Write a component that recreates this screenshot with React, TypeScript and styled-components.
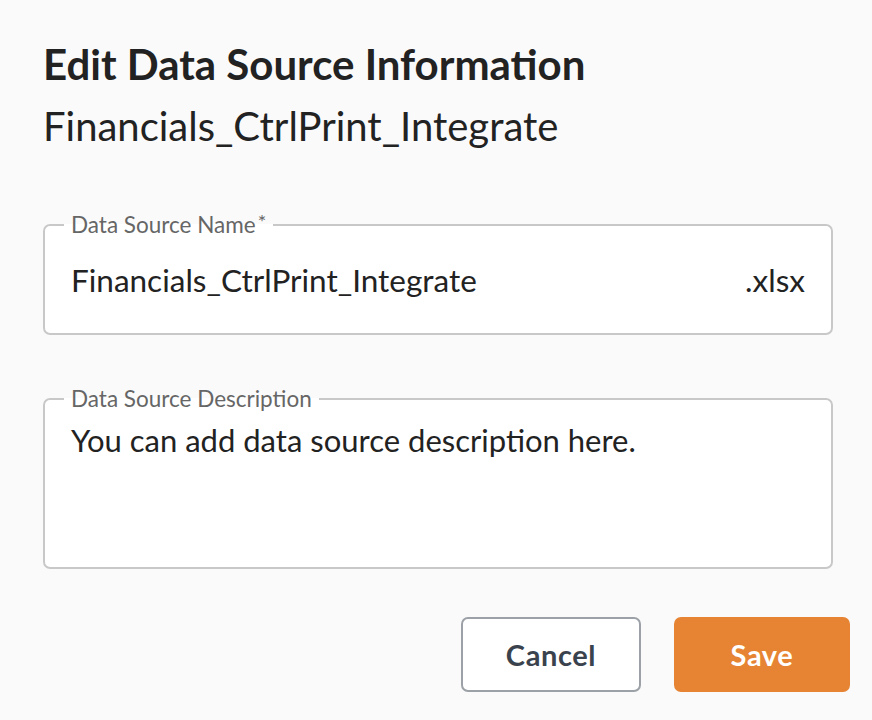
import React from 'react';
import styled, { createGlobalStyle } from 'styled-components';

const GlobalStyle = createGlobalStyle`
  html, body {
    margin: 0;
    background: #fafafa;
    font-family: Lato, "Open Sans", sans-serif;
  }
`;

const Page = styled.div`
  width: 872px;
  height: 720px;
  box-sizing: border-box;
  padding: 38px 22px 0 43px;
  background: #fafafa;
`;

const Title = styled.h1`
  margin: 0;
  font-size: 42px;
  line-height: 52px;
  font-weight: 700;
  color: #222;
`;

const Subtitle = styled.div`
  margin-top: 12px;
  font-size: 40px;
  line-height: 48px;
  font-weight: 400;
  color: #222;
`;

const Field = styled.fieldset<{ $height: number }>`
  margin: 0;
  width: 790px;
  height: ${p => p.$height}px;
  box-sizing: border-box;
  border: 2px solid #c8c8c8;
  border-radius: 7px;
  background: #fff;
  padding: 0 26px;
`;

const Legend = styled.legend`
  margin-left: -7px;
  padding: 0 7px;
  font-size: 22.5px;
  line-height: 24px;
  color: #666;
`;

const Star = styled.span`
  font-size: 20px;
  line-height: 16px;
  vertical-align: top;
  margin-left: 2px;
`;

const NameRow = styled.div`
  display: flex;
  justify-content: space-between;
  align-items: center;
  height: 86px;
  font-size: 31.5px;
  color: #222;
`;

const Description = styled.div`
  font-size: 31px;
  line-height: 38px;
  color: #222;
  padding-top: 10px;
`;

const Form = styled.div`
  margin-top: 63px;
  display: flex;
  flex-direction: column;
  gap: 52px;
`;

const Actions = styled.div`
  margin-top: 48px;
  display: flex;
  justify-content: flex-end;
  gap: 33px;
`;

const Button = styled.button<{ $primary?: boolean }>`
  width: ${p => (p.$primary ? 176 : 180)}px;
  height: 75px;
  box-sizing: border-box;
  border-radius: 7px;
  border: 2px solid ${p => (p.$primary ? '#e68433' : '#9ca1a7')};
  background: ${p => (p.$primary ? '#e68433' : '#fff')};
  color: ${p => (p.$primary ? '#fff' : '#3a434d')};
  font-family: inherit;
  font-size: 29px;
  font-weight: 700;
  letter-spacing: 0.6px;
  cursor: pointer;
`;

export default function App() {
  return (
    <>
      <GlobalStyle />
      <Page>
        <Title>Edit Data Source Information</Title>
        <Subtitle>Financials_CtrlPrint_Integrate</Subtitle>
        <Form>
          <Field $height={122}>
            <Legend>
              Data Source Name<Star>*</Star>
            </Legend>
            <NameRow>
              <span>Financials_CtrlPrint_Integrate</span>
              <span>.xlsx</span>
            </NameRow>
          </Field>
          <Field $height={182}>
            <Legend>Data Source Description</Legend>
            <Description>You can add data source description here.</Description>
          </Field>
        </Form>
        <Actions>
          <Button>Cancel</Button>
          <Button $primary>Save</Button>
        </Actions>
      </Page>
    </>
  );
}
